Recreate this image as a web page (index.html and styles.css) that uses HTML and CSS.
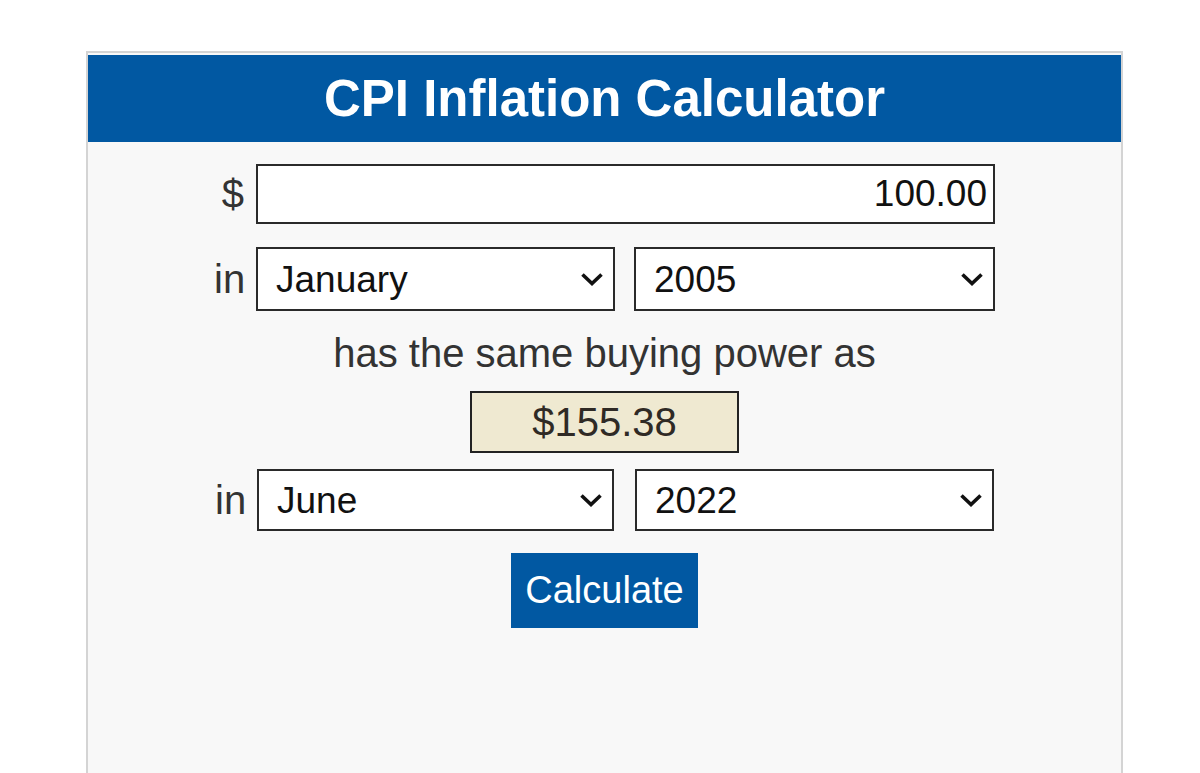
FILE: index.html
```html
<!DOCTYPE html>
<html lang="en">
<head>
  <meta charset="UTF-8">
  <title>CPI Inflation Calculator</title>
  <link rel="stylesheet" href="styles.css">
</head>
<body>
  <div class="calc">
    <h1 class="calc-title">CPI Inflation Calculator</h1>
    <form class="calc-body" onsubmit="return false;">
      <div class="row">
        <span class="label">$</span>
        <input class="amount" type="text" value="100.00">
      </div>

      <div class="row row-from">
        <span class="label">in</span>
        <span class="pick pick-month">
          <select>
            <option selected>January</option>
            <option>February</option>
            <option>March</option>
          </select>
          <svg class="chev" width="26" height="16" viewBox="0 0 26 16"><path d="M3.5 3.5 L13 12.5 L22.5 3.5" fill="none" stroke="#111" stroke-width="3.6"/></svg>
        </span>
        <span class="pick pick-year">
          <select>
            <option selected>2005</option>
            <option>2006</option>
          </select>
          <svg class="chev" width="26" height="16" viewBox="0 0 26 16"><path d="M3.5 3.5 L13 12.5 L22.5 3.5" fill="none" stroke="#111" stroke-width="3.6"/></svg>
        </span>
      </div>

      <p class="same">has the same buying power as</p>
      <div class="result">$155.38</div>

      <div class="row row-to">
        <span class="label">in</span>
        <span class="pick pick-month">
          <select>
            <option selected>June</option>
            <option>July</option>
          </select>
          <svg class="chev" width="26" height="16" viewBox="0 0 26 16"><path d="M3.5 3.5 L13 12.5 L22.5 3.5" fill="none" stroke="#111" stroke-width="3.6"/></svg>
        </span>
        <span class="pick pick-year">
          <select>
            <option selected>2022</option>
            <option>2021</option>
          </select>
          <svg class="chev" width="26" height="16" viewBox="0 0 26 16"><path d="M3.5 3.5 L13 12.5 L22.5 3.5" fill="none" stroke="#111" stroke-width="3.6"/></svg>
        </span>
      </div>

      <button class="calc-btn" type="submit">Calculate</button>
    </form>
  </div>
</body>
</html>
```
FILE: styles.css
```css
html, body {
  margin: 0;
  background: #fff;
  font-family: "Liberation Sans", Arial, sans-serif;
}
.calc {
  box-sizing: border-box;
  width: 1037px;
  height: 722px;
  margin: 51px 0 0 86px;
  padding-top: 2px;
  border: 2px solid #d4d4d4;
  border-bottom: none;
  background: #f8f8f8;
}
.calc-title {
  margin: 0;
  height: 87px;
  line-height: 87px;
  background: #0158a2;
  color: #fff;
  font-size: 51px;
  font-weight: bold;
  text-align: center;
}
.calc-body {
  display: flex;
  flex-direction: column;
  align-items: center;
  padding-top: 22px;
  margin: 0;
}
.row {
  display: flex;
  align-items: center;
}
.row-from {
  margin-top: 23px;
}
.row-to {
  margin-top: 16px;
}
.label {
  width: 30px;
  margin-right: 12px;
  text-align: right;
  font-size: 40px;
  color: #333;
}
.amount {
  box-sizing: border-box;
  width: 739px;
  height: 60px;
  padding: 0 6px 0 10px;
  border: 2px solid #2a2a2a;
  background: #fff;
  font-family: inherit;
  font-size: 37px;
  color: #111;
  text-align: right;
  outline: none;
}
/* selecty s vlastní šipkou */
.pick {
  position: relative;
  display: block;
}
.pick-month {
  width: 359px;
}
.pick-year {
  width: 361px;
  margin-left: 19px;
}
.pick select {
  display: block;
  box-sizing: border-box;
  width: 100%;
  height: 64px;
  padding: 0 44px 0 18px;
  border: 2px solid #2a2a2a;
  border-radius: 0;
  background: #fff;
  font-family: inherit;
  font-size: 37px;
  color: #111;
  -webkit-appearance: none;
  appearance: none;
  outline: none;
}
.row-to .pick select {
  height: 62px;
}
.row-to .pick-month {
  width: 357px;
}
.row-to .pick-year {
  width: 359px;
  margin-left: 21px;
}
.chev {
  position: absolute;
  right: 10px;
  top: 50%;
  margin-top: -8px;
  pointer-events: none;
}
.same {
  margin: 19px 0 0;
  line-height: 46px;
  font-size: 40px;
  color: #333;
}
.result {
  box-sizing: border-box;
  width: 269px;
  height: 62px;
  margin-top: 15px;
  line-height: 58px;
  border: 2px solid #222;
  background: #efe9d1;
  font-size: 40px;
  color: #2f2a25;
  text-align: center;
}
.calc-btn {
  margin-top: 22px;
  width: 187px;
  height: 75px;
  padding: 0;
  border: none;
  background: #0158a2;
  color: #fff;
  font-family: inherit;
  font-size: 38px;
  cursor: pointer;
}
```
